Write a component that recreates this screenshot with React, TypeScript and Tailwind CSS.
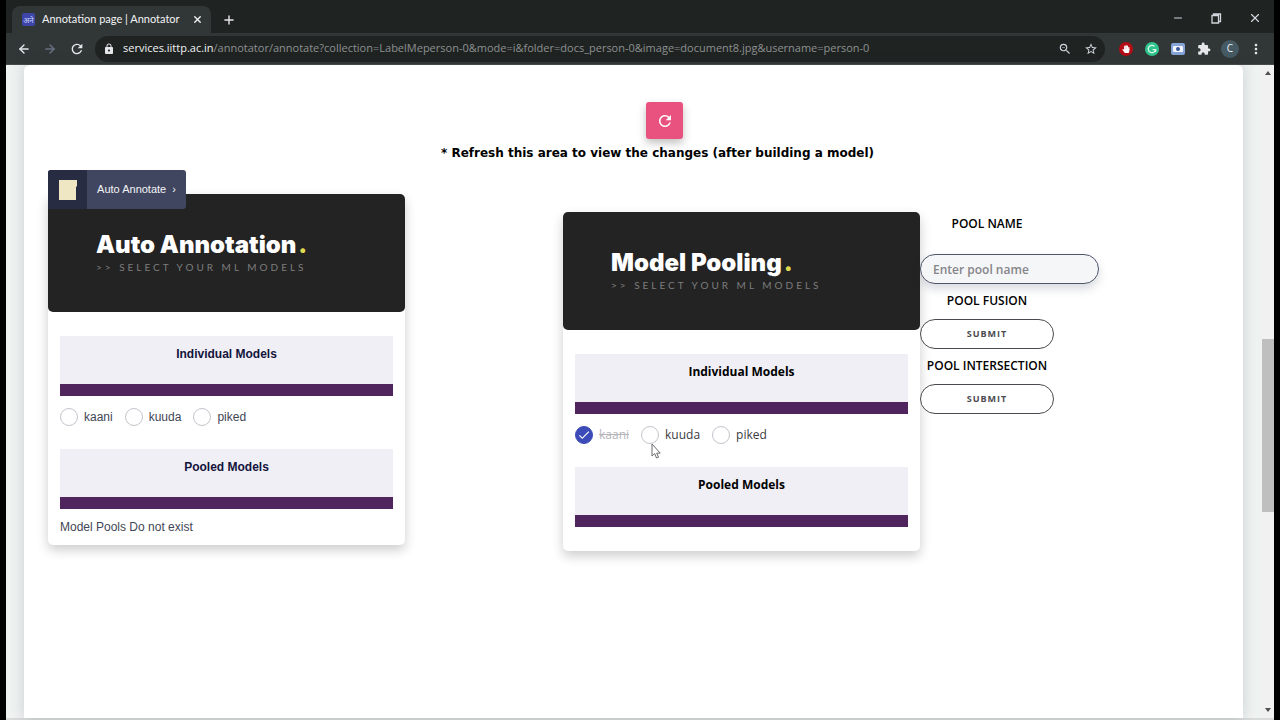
import { useState } from 'react';
import { ArrowLeft, ArrowRight, Minus, Plus, X } from 'lucide-react';
import {
  MdCheck,
  MdExtension,
  MdLock,
  MdMoreVert,
  MdOutlineStarBorder,
  MdOutlineZoomOut,
  MdRefresh,
} from 'react-icons/md';
import { FaHandPaper } from 'react-icons/fa';
import clsx from 'clsx';

const MODELS = ['kaani', 'kuuda', 'piked'];

const SANS = "font-['Liberation_Sans',sans-serif]";
const HUMANIST = "font-['Open_Sans','Noto_Sans',sans-serif]";

function TabStrip() {
  return (
    <div className="flex h-[33px] items-end bg-[#1f2322] pl-1.5">
      <div className="flex h-[27px] w-[199px] items-center rounded-t-lg bg-[#313636] pr-2 pl-2.5">
        <span className="flex h-[13px] w-[13px] items-center justify-center overflow-hidden rounded-xs bg-[#3d45a8] text-[8px] leading-none text-indigo-200">
          अने
        </span>
        <span className="ml-[7px] flex-1 font-['Lato',sans-serif] text-[11px] whitespace-nowrap text-gray-100">
          Annotation page | Annotator
        </span>
        <button aria-label="Close tab" className="text-gray-100">
          <X className="h-[11px] w-[11px]" strokeWidth={3} />
        </button>
      </div>
      <button aria-label="New tab" className="mb-[6px] ml-[11px] text-gray-200">
        <Plus className="h-[14px] w-[14px]" strokeWidth={2.4} />
      </button>
      <div className="mb-2 ml-auto flex items-center gap-[26px] pr-3 text-gray-300">
        <button aria-label="Minimize">
          <Minus className="h-3 w-3" strokeWidth={2} />
        </button>
        <button aria-label="Restore">
          <svg viewBox="0 0 12 12" className="h-3 w-3" fill="none" stroke="currentColor" strokeWidth="1.3">
            <path d="M2 3.5h6.5V11H2zM3.5 3.5V2H10.5v7.5H8.5" />
          </svg>
        </button>
        <button aria-label="Close window">
          <X className="h-[14px] w-[14px]" strokeWidth={2} />
        </button>
      </div>
    </div>
  );
}

function Toolbar() {
  return (
    <div className="flex h-8 items-center border-b border-[#454a4a] bg-[#313636] pr-[5px] pl-[11px] text-gray-200">
      <button aria-label="Back">
        <ArrowLeft className="h-[14px] w-[14px]" strokeWidth={2.4} />
      </button>
      <button aria-label="Forward" className="ml-3 text-gray-500">
        <ArrowRight className="h-[14px] w-[14px]" strokeWidth={2.4} />
      </button>
      <button aria-label="Reload" className="ml-3">
        <MdRefresh className="h-4 w-4" />
      </button>
      <div className="ml-2.5 flex h-[26px] flex-1 items-center rounded-full bg-[#1f2322] pr-[7px] pl-2">
        <MdLock className="h-3 w-3" />
        <span className="ml-2 flex-1 text-[11px] whitespace-nowrap text-[#8d9191]">
          <span className="text-gray-100">services.iittp.ac.in</span>
          /annotator/annotate?collection=LabelMeperson-0&mode=i&folder=docs_person-0&image=document8.jpg&username=person-0
        </span>
        <button aria-label="Zoom" className="text-gray-300">
          <MdOutlineZoomOut className="h-[14px] w-[14px]" />
        </button>
        <button aria-label="Bookmark this page" className="ml-3 text-gray-300">
          <MdOutlineStarBorder className="h-[14px] w-[14px]" />
        </button>
      </div>
      <div className="ml-2 flex items-center">
        <button aria-label="Ad blocker" className="flex w-[26px] justify-center">
          <span className="flex h-[14px] w-[14px] items-center justify-center rounded-full bg-[#b30d17] text-white">
            <FaHandPaper className="h-2 w-2" />
          </span>
        </button>
        <button aria-label="Writing assistant" className="flex w-[26px] justify-center">
          <svg viewBox="0 0 14 14" className="h-[14px] w-[14px]" fill="none">
            <circle cx="7" cy="7" r="7" fill="#2fc48d" />
            <path d="M9.6 4.4A3.7 3.7 0 1 0 10.6 7.6H7.6M10.6 7.6V10" stroke="#d9f7ea" strokeWidth="1.3" />
          </svg>
        </button>
        <button aria-label="Screen capture" className="flex w-[26px] justify-center">
          <svg viewBox="0 0 14 12" className="h-3 w-[14px]">
            <rect width="14" height="12" rx="2" fill="#86a4d8" />
            <rect x="2" y="3" width="10" height="6" rx="1" fill="#f3f6fc" />
            <circle cx="7" cy="6" r="2" fill="#36539c" />
          </svg>
        </button>
        <button aria-label="Extensions" className="flex w-[26px] justify-center">
          <MdExtension className="h-[14px] w-[14px]" />
        </button>
        <button aria-label="Profile" className="flex w-[26px] justify-center">
          <span className="flex h-[18px] w-[18px] items-center justify-center rounded-full bg-[#455a63] text-[10px] text-gray-100">
            C
          </span>
        </button>
        <button aria-label="Menu" className="flex w-[26px] justify-center">
          <MdMoreVert className="h-4 w-4" />
        </button>
      </div>
    </div>
  );
}

function Banner({ title }: { title: string }) {
  return (
    <header className="flex h-[118px] flex-col justify-center rounded-[5px] bg-[#232323] px-12">
      <h2 className="font-['Inter',sans-serif] text-2xl leading-7 font-black text-white">
        {title}
        <span className="ml-0.5 text-[#dfd94f]">.</span>
      </h2>
      <p className="font-['Lato',sans-serif] text-[10px] leading-4 tracking-[3px] text-[#7d7d7d]">
        &gt;&gt; SELECT YOUR ML MODELS
      </p>
    </header>
  );
}

function SectionTitle({ children }: { children: string }) {
  return (
    <h3 className="h-[60px] border-b-12 border-[#50245c] bg-[#f0eff6] pt-2 text-center text-[12px] leading-5 font-bold">
      {children}
    </h3>
  );
}

interface ModelListProps {
  name: string;
  checked: string[];
  onToggle: (model: string) => void;
  pointerOn?: string;
}

function ModelList({ name, checked, onToggle, pointerOn }: ModelListProps) {
  return (
    <div className="mb-[11px] flex h-[42px] items-center gap-3">
      {MODELS.map((model) => {
        const on = checked.includes(model);
        return (
          <label key={model} htmlFor={`${name}-${model}`} className="relative flex items-center gap-1.5 text-[12px]">
            <input
              id={`${name}-${model}`}
              type="checkbox"
              checked={on}
              onChange={() => onToggle(model)}
              className="h-[18px] w-[18px] appearance-none rounded-full border border-[#c4c4cb] bg-white checked:border-[#3c4bb8] checked:bg-[#3c4bb8]"
            />
            {on && <MdCheck className="pointer-events-none absolute left-0.5 h-3.5 w-3.5 text-white" />}
            <span className={clsx(on && 'text-[#b5b5ba] line-through')}>{model}</span>
            {pointerOn === model && (
              <svg viewBox="0 0 10 16" className="absolute top-[17px] left-[10px] h-4 w-2.5">
                <path
                  d="M1 1v12l2.7-2.4L5.5 15l2-.8-1.8-4.1H9.2z"
                  fill="#fff"
                  stroke="#6b6b6b"
                  strokeWidth="1"
                />
              </svg>
            )}
          </label>
        );
      })}
    </div>
  );
}

function PoolForm() {
  return (
    <form className="flex flex-col items-start text-black" onSubmit={(e) => e.preventDefault()}>
      <label htmlFor="pool-name" className="mt-1 w-[134px] text-center text-[12px] leading-4 font-semibold">
        POOL NAME
      </label>
      <input
        id="pool-name"
        type="text"
        placeholder="Enter pool name"
        className="mt-[22px] h-[30px] w-[179px] rounded-full border border-[#4d566b] bg-[#f5f6f8] px-3 text-[12px] font-semibold shadow-[0_5px_10px_rgba(40,50,80,0.18)] placeholder:text-[#85858a]"
      />
      {['POOL FUSION', 'POOL INTERSECTION'].map((title) => (
        <div key={title} className="mt-[9px] flex w-[134px] flex-col items-center">
          <h3 className="text-[12px] leading-4 font-semibold whitespace-nowrap">{title}</h3>
          <button
            aria-label={`Submit ${title.toLowerCase()}`}
            className="mt-2.5 h-[30px] w-full rounded-full border border-[#4a4a50] bg-white text-[9px] font-bold tracking-[1px] text-[#4a4a50]"
          >
            SUBMIT
          </button>
        </div>
      ))}
    </form>
  );
}

export default function App() {
  const [annotate, setAnnotate] = useState<string[]>([]);
  const [pooling, setPooling] = useState<string[]>(['kaani']);

  const toggle = (list: string[], model: string) =>
    list.includes(model) ? list.filter((m) => m !== model) : [...list, model];

  return (
    <div className={clsx(HUMANIST, 'flex h-screen flex-col overflow-hidden border-x-6 border-black bg-[#eef2f1]')}>
      <TabStrip />
      <Toolbar />
      <div className="flex min-h-0 flex-1 border-b-2 border-[#d8dada]">
        <main className="mr-[19px] ml-[18px] flex-1 rounded-t-md bg-white pt-[37px] shadow-[0_0_14px_rgba(60,70,80,0.2)]">
          <div className="flex flex-col items-center pl-12">
            <button
              aria-label="Refresh"
              className="ml-3.5 flex h-[37px] w-[37px] items-center justify-center rounded-[3px] bg-[#e9527f] text-white shadow-[0_4px_8px_rgba(0,0,0,0.25)]"
            >
              <MdRefresh className="h-[18px] w-[18px]" />
            </button>
            <p className="mt-1 font-['DejaVu_Sans',sans-serif] text-[12px] leading-5 font-bold text-black">
              * Refresh this area to view the changes (after building a model)
            </p>
          </div>

          <div className="mt-[7px] flex items-start pl-6">
            <section className={clsx(SANS, 'relative w-[357px] pt-6')}>
              <button className="absolute top-0 left-0 flex h-[39px] items-stretch overflow-hidden rounded-[3px] bg-[#414660] text-[11px] text-gray-100">
                <span className="flex w-[39px] items-center justify-center bg-[#272c42]">
                  <svg viewBox="0 0 18 20" className="h-5 w-[18px]">
                    <path d="M0 0h18v6l-1 1v13H0z" fill="#efe7c4" />
                  </svg>
                </span>
                <span className="flex w-[99px] items-center justify-center gap-1.5">
                  Auto Annotate <span>›</span>
                </span>
              </button>
              <div className="rounded-[5px] bg-white shadow-[0_5px_12px_rgba(0,0,0,0.2)]">
                <Banner title="Auto Annotation" />
                <div className="px-3 pt-6 text-[#3f4656]">
                  <div className="text-[#14143c]">
                    <SectionTitle>Individual Models</SectionTitle>
                  </div>
                  <ModelList name="annotate" checked={annotate} onToggle={(m) => setAnnotate(toggle(annotate, m))} />
                  <div className="text-[#14143c]">
                    <SectionTitle>Pooled Models</SectionTitle>
                  </div>
                  <p className="h-9 text-[12px] leading-9">Model Pools Do not exist</p>
                </div>
              </div>
            </section>

            <section className="mt-[42px] ml-[158px] w-[357px] rounded-[5px] bg-white text-black shadow-[0_5px_12px_rgba(0,0,0,0.2)]">
              <Banner title="Model Pooling" />
              <div className="px-3 pt-6 pb-6">
                <SectionTitle>Individual Models</SectionTitle>
                <div className="text-[#3c3c42]">
                  <ModelList
                    name="pooling"
                    checked={pooling}
                    onToggle={(m) => setPooling(toggle(pooling, m))}
                    pointerOn="kuuda"
                  />
                </div>
                <SectionTitle>Pooled Models</SectionTitle>
              </div>
            </section>

            <div className="mt-[42px]">
              <PoolForm />
            </div>
          </div>
        </main>

        <div className="flex w-3 flex-col items-center bg-[#f1f1f1] py-1.5">
          <svg viewBox="0 0 6 4" className="h-1 w-1.5">
            <path d="M0 4l3-4 3 4z" fill="#505050" />
          </svg>
          <div className="flex w-full flex-1 flex-col">
            <div className="flex-[264]" />
            <div className="flex-[173] bg-[#bfbfbf]" />
            <div className="flex-[196]" />
          </div>
          <svg viewBox="0 0 6 4" className="h-1 w-1.5">
            <path d="M0 0l3 4 3-4z" fill="#505050" />
          </svg>
        </div>
      </div>
    </div>
  );
}
